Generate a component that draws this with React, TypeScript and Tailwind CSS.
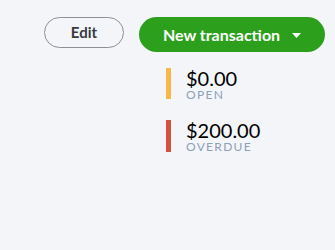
export default function App() {
  return (
    <div className="w-full h-[250px] bg-[#f4f5f9] flex flex-col items-end pr-[10px] pt-[17px]" style={{ fontFamily: 'Lato, "Noto Sans", sans-serif' }}>
      <div className="flex items-start gap-[15px]">
        <button className="w-[80px] h-[31px] rounded-full border border-[#8d9096] bg-transparent text-[15px] font-bold text-[#393a3d] flex items-center justify-center">
          Edit
        </button>
        <button className="w-[186px] h-[35px] rounded-full bg-[#2ca01c] text-white text-[16px] font-bold flex items-center justify-center gap-[12px]">
          <span>New transaction</span>
          <svg width="9" height="5" viewBox="0 0 9 5" className="mt-[1px]">
            <path d="M0 0 L9 0 L4.5 5 Z" fill="white" />
          </svg>
        </button>
      </div>
      <div className="w-[186px] pl-[27px] mt-[16px] flex flex-col gap-[20px]">
        <div className="flex">
          <div className="w-[5px] h-[31px] bg-[#f6b847]" />
          <div className="ml-[15px] flex flex-col">
            <span className="text-[20px] leading-[21px] text-[#000]">$0.00</span>
            <span className="text-[12px] leading-[11px] tracking-[1.3px] text-[#8ba1b8]">OPEN</span>
          </div>
        </div>
        <div className="flex">
          <div className="w-[5px] h-[32px] bg-[#d5513c]" />
          <div className="ml-[15px] flex flex-col">
            <span className="text-[20px] leading-[21px] text-[#000]">$200.00</span>
            <span className="text-[12px] leading-[11px] tracking-[1.3px] text-[#8ba1b8]">OVERDUE</span>
          </div>
        </div>
      </div>
    </div>
  );
}
